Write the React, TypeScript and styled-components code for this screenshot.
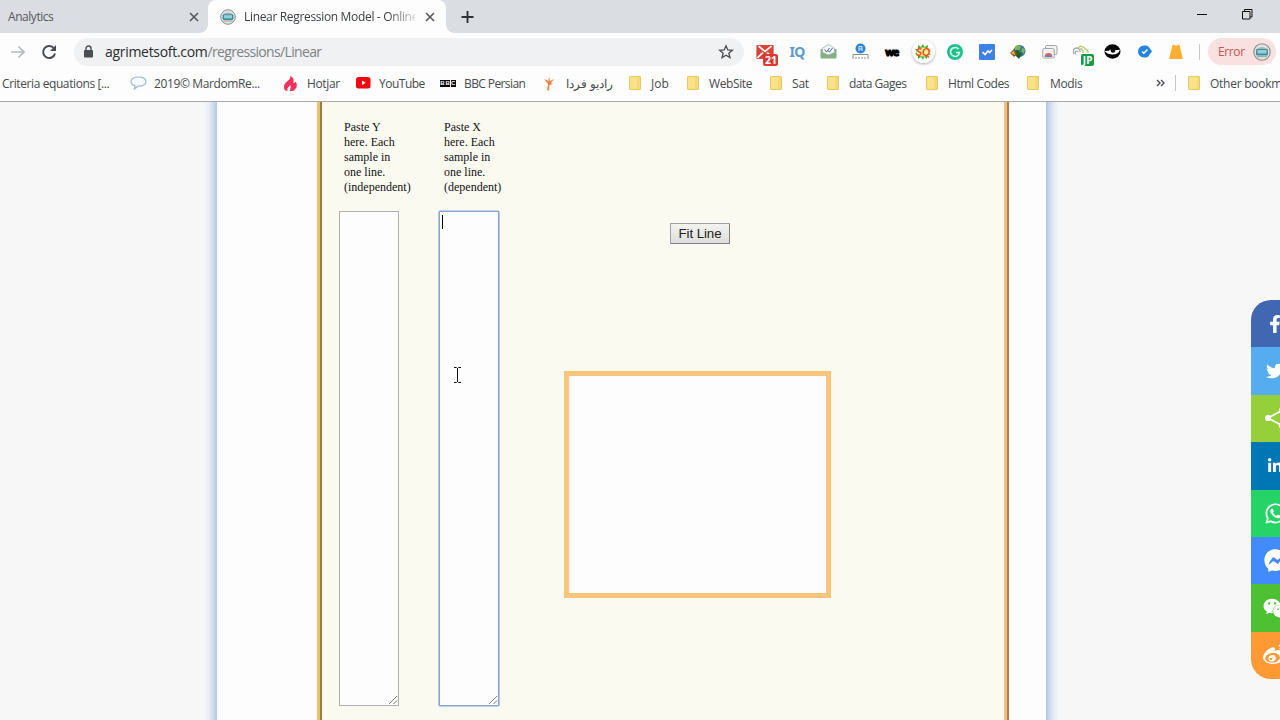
import React from "react";
import styled, { createGlobalStyle } from "styled-components";
import {
  FaFacebookF,
  FaTwitter,
  FaLinkedinIn,
  FaWhatsapp,
  FaFacebookMessenger,
  FaWeixin,
  FaWeibo,
} from "react-icons/fa";

const GlobalStyle = createGlobalStyle`
  * { box-sizing: border-box; }
  body { margin: 0; overflow: hidden; background: #f7f7f7; }
`;

const Window = styled.div`
  position: relative;
  display: flex;
  flex-direction: column;
  width: 1280px;
  height: 720px;
  overflow: hidden;
  font-family: "Open Sans", "Noto Sans", sans-serif;
  font-size: 12px;
  color: #46494d;
`;

const Text = styled.span<{ $track?: number; $color?: string }>`
  white-space: nowrap;
  letter-spacing: ${(p) => p.$track ?? 0}px;
  color: ${(p) => p.$color ?? "inherit"};
`;

/* ---------- tab strip ---------- */
const TabStrip = styled.div`
  display: flex;
  flex: none;
  height: 33px;
  background: #dadde1;
`;

const Tab = styled.div<{ $width: number; $active?: boolean }>`
  position: relative;
  display: flex;
  align-items: center;
  width: ${(p) => p.$width}px;
  padding: 0 ${(p) => (p.$active ? 11 : 9)}px 0 ${(p) => (p.$active ? 12 : 8)}px;
  border-radius: 8px 8px 0 0;
  background: ${(p) => (p.$active ? "#fdfdfd" : "transparent")};
  color: ${(p) => (p.$active ? "#3c4043" : "#55595e")};
  &::before, &::after {
    content: "";
    display: ${(p) => (p.$active ? "block" : "none")};
    position: absolute;
    bottom: 0;
    width: 8px;
    height: 8px;
  }
  &::before { left: -8px; background: radial-gradient(circle at 0 0, transparent 7.5px, #fdfdfd 8px); }
  &::after { right: -8px; background: radial-gradient(circle at 100% 0, transparent 7.5px, #fdfdfd 8px); }
`;

const TabTitle = styled.div<{ $fade?: boolean }>`
  flex: 1;
  overflow: hidden;
  white-space: nowrap;
  margin-right: 10px;
  mask-image: ${(p) => (p.$fade ? "linear-gradient(90deg, #000 84%, transparent 104%)" : "none")};
`;

const TabIcon = styled.span`
  display: flex;
  margin-right: 8px;
`;

const NewTab = styled.div`
  display: flex;
  align-items: center;
  margin-left: 14px;
`;

const WindowControls = styled.div`
  display: flex;
  gap: 34px;
  align-items: center;
  margin-left: auto;
  padding: 0 27px 5px 0;
`;

/* ---------- toolbar ---------- */
const Toolbar = styled.div`
  display: flex;
  flex: none;
  align-items: center;
  height: 37px;
  background: #fdfdfd;
`;

const NavButtons = styled.div`
  display: flex;
  align-items: center;
  gap: 15px;
  width: 74px;
  padding-left: 10px;
`;

const Omnibox = styled.div`
  display: flex;
  align-items: center;
  width: 670px;
  height: 28px;
  padding: 0 10px 0 9px;
  border-radius: 14px;
  background: #eff1f2;
  font-size: 14px;
`;

const Url = styled.div`
  flex: 1;
  margin-left: 11px;
  line-height: 20px;
`;

const Extensions = styled.div`
  display: grid;
  grid-template-columns: repeat(14, 31.6px);
  flex: none;
  margin-left: 5.6px;
  justify-items: center;
  align-items: center;
`;

const Extension = styled.div`
  position: relative;
  display: flex;
  align-items: center;
  justify-content: center;
  height: 28px;
`;

const Badge = styled.span<{ $bg: string; $left: number; $size: number }>`
  position: absolute;
  left: ${(p) => p.$left}px;
  top: 16px;
  padding: 0 1.5px;
  border-radius: 2px;
  background: ${(p) => p.$bg};
  color: #fff;
  font: 700 ${(p) => p.$size}px/12px "Open Sans", sans-serif;
`;

const IqMark = styled.span`
  font: 700 14px/16px "Noto Sans", sans-serif;
  color: #5b9bcb;
  letter-spacing: -0.8px;
`;

const WeMark = styled.span`
  font: 900 11px/14px "Lato", sans-serif;
  color: #000;
  letter-spacing: -0.8px;
  -webkit-text-stroke: 1.2px #000;
`;

const SqMark = styled.span`
  position: absolute;
  font: italic 900 11px/14px "Lato", sans-serif;
  color: #f0541c;
`;

const SqDisc = styled.div`
  display: flex;
  align-items: center;
  justify-content: center;
  width: 23px;
  height: 23px;
  border-radius: 50%;
  background: #fff;
  box-shadow: 0 1px 3px rgba(0, 0, 0, 0.3);
`;

const Divider = styled.span<{ $left: number; $right: number }>`
  flex: none;
  width: 1px;
  height: 16px;
  margin: 0 ${(p) => p.$right}px 0 ${(p) => p.$left}px;
  background: #c6c8ca;
`;

const ErrorPill = styled.div`
  display: flex;
  flex: none;
  align-items: center;
  justify-content: space-between;
  width: 68px;
  height: 27px;
  padding: 0 5px 0 10px;
  border-radius: 14px;
  background: #fae1e1;
  color: #c5534d;
  font-size: 12px;
`;

/* ---------- bookmarks ---------- */
const BookmarkBar = styled.div`
  display: flex;
  flex: none;
  align-items: center;
  height: 32px;
  padding-bottom: 5px;
  background: #fdfdfd;
  border-bottom: 1px solid #a9a9ab;
`;

const Bookmark = styled.div<{ $width: number }>`
  display: flex;
  flex: none;
  align-items: center;
  width: ${(p) => p.$width}px;
`;

const BookmarkIcon = styled.span<{ $slot: number }>`
  display: flex;
  flex: none;
  width: ${(p) => p.$slot}px;
`;

const Overflow = styled.span`
  display: flex;
  flex: none;
  width: 19px;
`;

const BbcMark = styled.span`
  display: flex;
  gap: 0.6px;
  i {
    width: 4.8px;
    height: 7px;
    background: #000;
    color: #fff;
    font: 700 6px/7px "Liberation Sans", sans-serif;
    text-align: center;
  }
`;

const Folder = styled.span`
  width: 12px;
  height: 14px;
  border: 1px solid #e3ca66;
  background: linear-gradient(90deg, #fae28a 75%, #f5d978 75%);
  border-radius: 1px;
`;

/* ---------- page ---------- */
const Page = styled.main`
  position: relative;
  display: flex;
  flex: 1;
  overflow: hidden;
  padding-left: 217px;
  background: #f7f7f7;
`;

const Sheet = styled.div`
  width: 829px;
  height: 660px;
  margin-top: -20px;
  padding: 20px 39px 0 100px;
  background: #fdfdfe;
  box-shadow: 0 0 12px 1px #7ea0dc;
`;

const Panel = styled.section`
  display: flex;
  height: 640px;
  padding-left: 17px;
  background: #fbfaf1;
  border: solid;
  border-width: 0 3px;
  border-color: #e8c36c;
  border-right-color: #f1c27c;
  box-shadow: inset 2px 0 #96804a, 2px 0 #b07b50;
`;

const SampleColumn = styled.div`
  flex: none;
  width: 100px;
  padding-left: 2px;
`;

const SampleLabel = styled.div`
  width: 60px;
  margin: 18px 0 16px 5px;
  font: 12px/15px "Liberation Serif", serif;
  color: #111;
`;

const SampleBox = styled.div<{ $focused?: boolean }>`
  position: relative;
  display: flex;
  align-items: flex-end;
  justify-content: flex-end;
  width: 60px;
  height: 495px;
  background: #fefdfe;
  border: 1px solid ${(p) => (p.$focused ? "#87a4d3" : "#b0b0b0")};
  border-radius: ${(p) => (p.$focused ? 1 : 0)}px;
  box-shadow: ${(p) => (p.$focused ? "0 0 0 0.6px #8aa7d6" : "none")};
`;

const Caret = styled.span`
  position: absolute;
  left: 2px;
  top: 3px;
  width: 1px;
  height: 14px;
  background: #000;
`;

const Results = styled.div`
  display: flex;
  flex: none;
  flex-direction: column;
  align-items: center;
  width: 267px;
  margin-left: 27px;
`;

const FitButton = styled.button`
  width: 60px;
  height: 21px;
  margin: 121px 0 127px 5px;
  padding: 0;
  border: 1px solid #8c8c8c;
  border-color: #a0a0a0 #808080 #808080 #a0a0a0;
  border-radius: 1px;
  background: linear-gradient(#f3f3f0, #dededb);
  font: 13.33px "Liberation Sans", Arial, sans-serif;
  letter-spacing: -0.1px;
  color: #222;
`;

const Plot = styled.div`
  width: 267px;
  height: 227px;
  border: 5px solid #f8c67a;
  background: #fdfdfd;
`;

const Pointer = styled.svg`
  position: absolute;
  left: 453px;
  top: 366px;
`;

const ShareRail = styled.aside`
  position: absolute;
  right: -19px;
  top: 300px;
  width: 48px;
  border-radius: 20px 0 0 20px;
  overflow: hidden;
`;

const ShareButton = styled.div<{ $bg: string }>`
  display: flex;
  align-items: center;
  justify-content: center;
  height: 47.4px;
  background: ${(p) => p.$bg};
  color: #fff;
`;

const Close = () => (
  <svg width="10" height="10" viewBox="0 0 10 10" stroke="#55585c" strokeWidth="1.6">
    <path d="M1 1l8 8M9 1l-8 8" />
  </svg>
);

const SiteMark = ({ size = 16 }: { size?: number }) => (
  <svg width={size} height={size} viewBox="0 0 18 18">
    <circle cx="9" cy="9" r="8.2" fill="#dfe3e0" stroke="#858d8b" strokeWidth="1.1" />
    <path d="M3 6.500Q9 1.500 15 6.500L14.500 9H3.500z" fill="#a3b5b2" />
    <rect x="3" y="6" width="12" height="6.500" rx="1.500" fill="#458c96" />
    <rect x="4.500" y="7" width="9" height="3.500" fill="#8fd2dc" />
    <path d="M4 13.500h10" stroke="#a6aaa2" strokeWidth="1.300" />
  </svg>
);

const Bubble = () => (
  <svg width="17" height="14" viewBox="0 0 17 14" fill="#f8fbff" stroke="#9db7dc" strokeWidth="1.200">
    <path d="M8.500 1C4 1 1 3 1 5.600c0 2 1.500 3.500 4 4.200L4.300 13l4-2.800c4.700 0 7.700-1.800 7.700-4.600S13 1 8.500 1z" />
  </svg>
);

const Flame = () => (
  <svg width="15" height="15" viewBox="0 0 15 16" fill="#f4315d">
    <path d="M7 0c1 3-1 4-3.500 6C.5 8.500-.5 12 2 15.500L4.500 16c-1-3 .5-4 3-6.500.5 2.500 0 4-1 6.500h3.500c5-3 5-7 3-10-1 1-1.500 1.500-2.500 1.500C11.500 4.500 10.500 1 7 0z" />
  </svg>
);

const YouTube = () => (
  <svg width="15" height="12" viewBox="0 0 15 12">
    <rect width="14.500" height="11.500" rx="2.500" fill="#f40612" />
    <path d="M6 3.500v4.600L9.800 5.800z" fill="#fff" />
  </svg>
);

const Torch = () => (
  <svg width="12" height="15" viewBox="0 0 12 15" fill="#ec8447">
    <path d="M1 3l4.500 2L6 .5l1 4.500 4-2-3 4 2 1-3.500 1L6 14.500 4 14l1-6z" />
  </svg>
);

const bookmarks = [
  { label: "2019© MardomRe...", width: 153, slot: 24, track: -0.38, icon: <Bubble /> },
  { label: "Hotjar", width: 73, slot: 24, track: -0.35, icon: <Flame /> },
  { label: "YouTube", width: 84, slot: 23, track: -0.5, icon: <YouTube /> },
  { label: "BBC Persian", width: 103, slot: 24, track: -0.6, icon: <BbcMark><i>B</i><i>B</i><i>C</i></BbcMark> },
  { label: "رادیو فردا", width: 86, slot: 23, track: 0, icon: <Torch /> },
  { label: "Job", width: 58, slot: 22, track: 0, icon: <Folder /> },
  { label: "WebSite", width: 83, slot: 22, track: -0.4, icon: <Folder /> },
  { label: "Sat", width: 57, slot: 22, track: -0.2, icon: <Folder /> },
  { label: "data Gages", width: 99, slot: 22, track: -0.5, icon: <Folder /> },
  { label: "Html Codes", width: 101, slot: 22, track: -0.38, icon: <Folder /> },
  { label: "Modis", width: 129, slot: 23, track: -0.35, icon: <Folder /> },
];

const shares = [
  { bg: "#4267b2", icon: <FaFacebookF size={18} /> },
  { bg: "#55acee", icon: <FaTwitter size={18} /> },
  {
    bg: "#95d03a",
    icon: (
      <svg width="22" height="20" viewBox="0 0 22 20" fill="#fff" stroke="#fff" strokeWidth="1.800">
        <path d="M18 2.500L4 10l14 7.500" fill="none" />
        <circle cx="4" cy="10" r="2.200" />
        <circle cx="18" cy="2.500" r="2.200" />
        <circle cx="18" cy="17.500" r="2.200" />
      </svg>
    ),
  },
  { bg: "#0077b5", icon: <FaLinkedinIn size={16} /> },
  { bg: "#25d366", icon: <FaWhatsapp size={23} /> },
  { bg: "#448aff", icon: <FaFacebookMessenger size={23} /> },
  { bg: "#4ec034", icon: <FaWeixin size={25} /> },
  { bg: "#ff9933", icon: <FaWeibo size={24} /> },
];

const ExtensionIcons = () => (
  <Extensions>
    <Extension>
      <svg width="18" height="14" viewBox="0 0 16 13">
        <rect width="16" height="13" rx="1" fill="#d9443a" />
        <path d="M2 1l6 5 6-5M1 12l5-5M15 12l-5-5" fill="none" stroke="#fff" strokeWidth="1.500" />
      </svg>
      <Badge $bg="#d93a32" $left={7} $size={10.5}>21</Badge>
    </Extension>
    <Extension><IqMark>IQ</IqMark></Extension>
    <Extension>
      <svg width="17" height="15" viewBox="0 0 17 15">
        <path d="M.5 5h16v8.500q0 1-1 1h-14q-1 0-1-1z" fill="#7fb183" />
        <path d="M2.500 4L8.500.5l6 3.500v4.500l-6 2.500-6-2.500z" fill="#f4f5f8" stroke="#a4aaa8" strokeWidth=".7" />
        <path d="M4.500 5.500l2 2.500 3-4M8 7l1.500 1 3-4" fill="none" stroke="#4b6796" />
      </svg>
    </Extension>
    <Extension>
      <svg width="17" height="17" viewBox="0 0 17 17">
        <circle cx="8.500" cy="5.500" r="5" fill="#2e83d6" />
        <path d="M7 8V3.500h3V8M7 6h3" stroke="#d8ecff" fill="none" />
        <path d="M1 16v-4.500h15V16M4 16v-2m3 2v-2m3 2v-2m3 2v-2" fill="#fff" stroke="#858b95" />
      </svg>
    </Extension>
    <Extension><WeMark>we</WeMark></Extension>
    <Extension>
      <SqDisc>
        <svg width="16" height="16" viewBox="0 0 16 16">
          <path d="M8 0l1.500 3L13 1l-.5 4L16 6l-3 2 3 3-4 0 0 4-3-2-1 3-2-3-3 2 0-4-3-1 2-2-2-3 3 0 0-4 3 2z" fill="#55a630" />
          <ellipse cx="8" cy="8" rx="6.500" ry="4.500" fill="#fff0a0" />
        </svg>
        <SqMark>SQ</SqMark>
      </SqDisc>
    </Extension>
    <Extension>
      <svg width="16" height="16" viewBox="0 0 16 16">
        <circle cx="8" cy="8" r="8" fill="#1fc28a" />
        <path d="M11.500 5A4.500 4.500 0 1 0 12.500 8.500H9" fill="none" stroke="#e9fff7" strokeWidth="1.500" />
      </svg>
    </Extension>
    <Extension>
      <svg width="16" height="16" viewBox="0 0 16 16">
        <rect width="16" height="16" rx="1" fill="#3e7fe8" />
        <path d="M3.500 8l2.500 2.500L9 7l1.500 1.500L13 6" fill="none" stroke="#fff" strokeWidth="1.600" />
      </svg>
    </Extension>
    <Extension>
      <svg width="16" height="14" viewBox="0 0 16 14">
        <circle cx="9.500" cy="6" r="6" fill="#3576ac" />
        <path d="M5 1.500Q10-1 11 2.500L9 5 5 5zM12 3l3 1-1 4-3 1z" fill="#7aba45" />
        <path d="M4 6l4-1 2 3 3-1-4 7-3-3z" fill="#255e24" />
        <path d="M0 8l4-4 3 5-3 3z" fill="#8a5826" />
        <path d="M1 8l3-2 1 4z" fill="#e3c93c" />
      </svg>
    </Extension>
    <Extension>
      <svg width="16" height="14" viewBox="0 0 16 14" fill="#f3f3f3" stroke="#a3a6a9">
        <rect x="3.500" y=".5" width="11.500" height="9" rx="1.500" />
        <rect x=".7" y="3.500" width="11.500" height="9.500" rx="1.500" />
        <path d="M3.500 12a3 3 0 0 1 6 0" stroke="#dc6558" strokeWidth="1.800" fill="#4285f4" />
      </svg>
    </Extension>
    <Extension>
      <svg width="16" height="14" viewBox="0 0 16 14" fill="none" strokeWidth="1.500">
        <path d="M1 9a3.500 3.500 0 1 1 6-2M3 9a1.500 1.500 0 1 1 2-2" stroke="#a6adb0" />
        <path d="M5 3a4 4 0 0 1 7 1q3 0 3 4M7 4q3-1 3 4" stroke="#bccf74" />
      </svg>
      <Badge $bg="#159a49" $left={8} $size={10}>JP</Badge>
    </Extension>
    <Extension>
      <svg width="17" height="15" viewBox="0 0 17 15">
        <ellipse cx="8.500" cy="7.500" rx="8" ry="7.200" fill="#050505" />
        <path d="M.5 7q4 .5 6-1.500 2 2 4 0 2 1 5.500 0-1.500 5-7 5T.5 7z" fill="#fff" />
        <circle cx="9" cy="6.500" r="2.300" fill="#050505" />
      </svg>
    </Extension>
    <Extension>
      <svg width="14" height="13" viewBox="0 0 14 13">
        <path d="M6 .5h2q2.500 0 3.500 2.500L14 6.500l-2.500 3q-1 3-4 3H6A6 6 0 0 1 6 .5z" fill="#2584dc" />
        <path d="M4 6.500l1.800 1.700 3.700-3.700" fill="none" stroke="#fff" strokeWidth="1.400" />
      </svg>
    </Extension>
    <Extension>
      <svg width="14" height="15" viewBox="0 0 14 15">
        <path d="M3.500 1q1.500-1 3.500 1 2-2 3.500-1L14 15H0z" fill="#fbb034" />
      </svg>
    </Extension>
  </Extensions>
);

const Grip = () => (
  <svg width="10" height="10" viewBox="0 0 10 10" stroke="#808080" fill="none">
    <path d="M1 9L9 1M5.500 9L9 5.500" />
  </svg>
);

export default function App() {
  return (
    <Window>
      <GlobalStyle />
      <TabStrip>
        <Tab $width={208}>
          <TabTitle><Text $track={-0.45}>Analytics</Text></TabTitle>
          <Close />
        </Tab>
        <Tab $width={238} $active>
          <TabIcon><SiteMark /></TabIcon>
          <TabTitle $fade><Text $track={-0.33}>Linear Regression Model - Online</Text></TabTitle>
          <Close />
        </Tab>
        <NewTab>
          <svg width="14" height="14" viewBox="0 0 14 14" stroke="#303336" strokeWidth="1.900">
            <path d="M7.500 1v12M1.500 7h12" />
          </svg>
        </NewTab>
        <WindowControls>
          <svg width="11" height="11" viewBox="0 0 11 11" stroke="#111"><path d="M0 5.500h10" /></svg>
          <svg width="11" height="11" viewBox="0 0 11 11" stroke="#111" fill="none">
            <path d="M.5 2.500h7.500v7.500H.5zM2.500 2.500v-2H10v7.500H8" />
          </svg>
        </WindowControls>
      </TabStrip>

      <Toolbar>
        <NavButtons>
          <svg width="16" height="14" viewBox="0 0 16 14" fill="none" stroke="#b6b8bb" strokeWidth="1.700">
            <path d="M1 7h13M8.500 1.500L14 7l-5.500 5.500" />
          </svg>
          <svg width="16" height="16" viewBox="0 0 16 16" fill="none" stroke="#4a4d51" strokeWidth="2">
            <path d="M13 4.500A6 6 0 1 0 14 9.500" />
            <path d="M15 1v6H9z" fill="#4a4d51" stroke="none" />
          </svg>
        </NavButtons>
        <Omnibox>
          <svg width="11" height="13" viewBox="0 0 11 13">
            <rect x="1" y="5" width="9" height="7.500" rx="1" fill="#4a4d51" />
            <path d="M3 5V3.500a2.500 2.500 0 0 1 5 0V5" fill="none" stroke="#4a4d51" strokeWidth="1.400" />
          </svg>
          <Url>
            <Text $track={-0.3} $color="#2b2d30">agrimetsoft.com</Text>
            <Text $track={-0.66} $color="#7d8185">/regressions/Linear</Text>
          </Url>
          <svg width="16" height="16" viewBox="0 0 16 16" fill="none" stroke="#4a4d51" strokeWidth="1.300">
            <path d="M8 1.800l1.800 4.200 4.500.3-3.500 2.900 1.200 4.400L8 11.200l-4 2.400 1.200-4.400L1.700 6.300 6.200 6z" />
          </svg>
        </Omnibox>
        <ExtensionIcons />
        <Divider $left={7} $right={8} />
        <ErrorPill>
          <Text $track={-0.35}>Error</Text>
          <SiteMark size={18} />
        </ErrorPill>
      </Toolbar>

      <BookmarkBar>
        <Bookmark $width={130}>
          <BookmarkIcon $slot={2} />
          <Text $track={-0.4}>Criteria equations [...</Text>
        </Bookmark>
        {bookmarks.map((b) => (
          <Bookmark key={b.label} $width={b.width}>
            <BookmarkIcon $slot={b.slot}>{b.icon}</BookmarkIcon>
            <Text $track={b.track}>{b.label}</Text>
          </Bookmark>
        ))}
        <Overflow>
          <svg width="9" height="8" viewBox="0 0 9 8" fill="none" stroke="#4a4d51" strokeWidth="1.400">
            <path d="M1 1l3 3-3 3M5 1l3 3-3 3" />
          </svg>
        </Overflow>
        <Divider $left={0} $right={12} />
        <Bookmark $width={120}>
          <BookmarkIcon $slot={22}><Folder /></BookmarkIcon>
          <Text $track={-0.25}>Other bookmarks</Text>
        </Bookmark>
      </BookmarkBar>

      <Page>
        <Sheet>
          <Panel>
            <SampleColumn>
              <SampleLabel>Paste Y here. Each sample in one line. (independent)</SampleLabel>
              <SampleBox><Grip /></SampleBox>
            </SampleColumn>
            <SampleColumn>
              <SampleLabel>Paste X here. Each sample in one line. (dependent)</SampleLabel>
              <SampleBox $focused><Caret /><Grip /></SampleBox>
            </SampleColumn>
            <Results>
              <FitButton>Fit Line</FitButton>
              <Plot />
            </Results>
          </Panel>
        </Sheet>
      </Page>

      <Pointer width="9" height="18" viewBox="0 0 9 18" fill="none" stroke="#111">
        <path d="M1 1.500h2.500l1 1 1-1H8M4.500 2v14M1 16.500h2.500l1-1 1 1H8" />
      </Pointer>

      <ShareRail>
        {shares.map((s) => (
          <ShareButton key={s.bg} $bg={s.bg}>{s.icon}</ShareButton>
        ))}
      </ShareRail>
    </Window>
  );
}
